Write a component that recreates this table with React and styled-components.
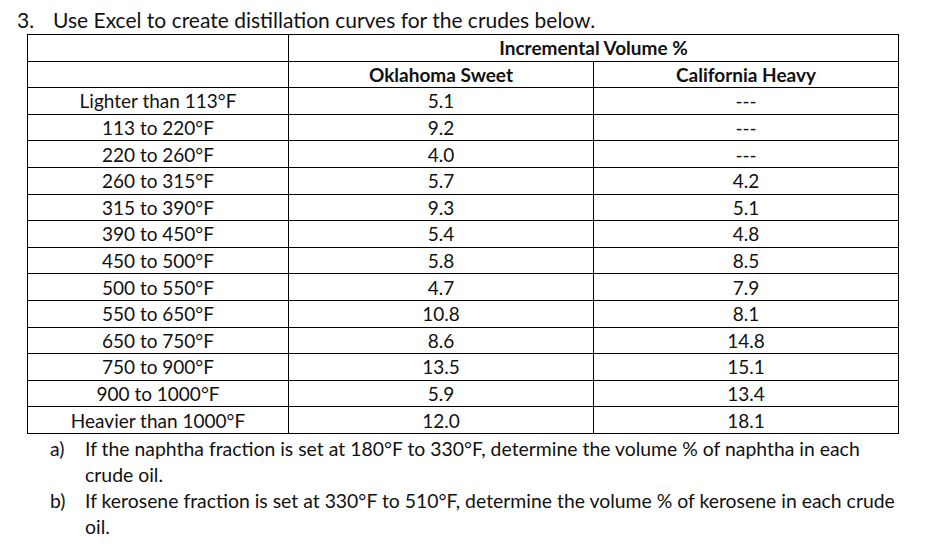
import React from "react";
import styled, { createGlobalStyle } from "styled-components";

const GlobalStyle = createGlobalStyle`
  body {
    margin: 0;
    background: #fff;
  }
`

const Page = styled.div`
  font-family: Lato, "Open Sans", sans-serif;
  font-size: 19px;
  color: #111;
  padding: 7px 0 0 0;
  width: 932px;
  height: 547px;
  box-sizing: border-box;
`

const Heading = styled.div`
  display: flex;
  height: 26px;
  line-height: 26px;
  font-size: 21px;
`

const Num = styled.span`
  width: 53px;
  padding-left: 17px;
  box-sizing: border-box;
`

const Table = styled.table`
  border-collapse: collapse;
  margin: 1px 0 0 27px;
  width: 871px;
  table-layout: fixed;
`

const Cell = styled.td`
  border: 1px solid #000;
  height: 25.6px;
  padding: 0;
  line-height: 25px;
  text-align: center;
  font-weight: ${(p) => (p.$bold ? 700 : 400)};
  white-space: nowrap;
`

const Questions = styled.ol`
  list-style: none;
  margin: 2px 0 0 0;
  padding: 0;
  font-size: 19.4px;
`

const Item = styled.li`
  display: flex;
  line-height: 26px;
`

const Letter = styled.span`
  flex: 0 0 85px;
  padding-left: 50px;
  box-sizing: border-box;
`

const ItemText = styled.span`
  width: 815px;
`

const rows = [
  ["Lighter than 113°F", "5.1", "---"],
  ["113 to 220°F", "9.2", "---"],
  ["220 to 260°F", "4.0", "---"],
  ["260 to 315°F", "5.7", "4.2"],
  ["315 to 390°F", "9.3", "5.1"],
  ["390 to 450°F", "5.4", "4.8"],
  ["450 to 500°F", "5.8", "8.5"],
  ["500 to 550°F", "4.7", "7.9"],
  ["550 to 650°F", "10.8", "8.1"],
  ["650 to 750°F", "8.6", "14.8"],
  ["750 to 900°F", "13.5", "15.1"],
  ["900 to 1000°F", "5.9", "13.4"],
  ["Heavier than 1000°F", "12.0", "18.1"],
]

export default function App() {
  return (
    <Page>
      <GlobalStyle />
      <Heading>
        <Num>3.</Num>
        <span>Use Excel to create distillation curves for the crudes below.</span>
      </Heading>
      <Table>
        <colgroup>
          <col style={{ width: 261 }} />
          <col style={{ width: 305 }} />
          <col style={{ width: 305 }} />
        </colgroup>
        <tbody>
          <tr>
            <Cell />
            <Cell $bold colSpan={2}>Incremental Volume %</Cell>
          </tr>
          <tr>
            <Cell />
            <Cell $bold>Oklahoma Sweet</Cell>
            <Cell $bold>California Heavy</Cell>
          </tr>
          {rows.map((r) => (
            <tr key={r[0]}>
              <Cell>{r[0]}</Cell>
              <Cell>{r[1]}</Cell>
              <Cell>{r[2]}</Cell>
            </tr>
          ))}
        </tbody>
      </Table>
      <Questions>
        <Item>
          <Letter>a)</Letter>
          <ItemText>If the naphtha fraction is set at 180°F to 330°F, determine the volume % of naphtha in each crude oil.</ItemText>
        </Item>
        <Item>
          <Letter>b)</Letter>
          <ItemText>If kerosene fraction is set at 330°F to 510°F, determine the volume % of kerosene in each crude oil.</ItemText>
        </Item>
      </Questions>
    </Page>
  )
}
